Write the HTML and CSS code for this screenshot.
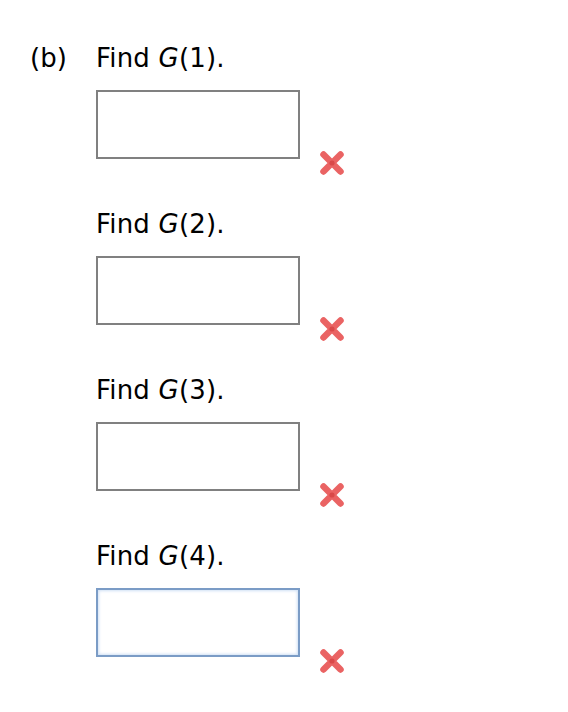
FILE: index.html
```html
<!DOCTYPE html>
<html>
<head>
<meta charset="utf-8">
<link rel="stylesheet" href="styles.css">
</head>
<body>
<svg width="0" height="0" class="defs"><defs><filter id="soft" x="-20%" y="-20%" width="140%" height="140%"><feGaussianBlur stdDeviation="0.6"/></filter></defs></svg>
<div class="part">
  <div class="part-label">(b)</div>
  <div class="questions">
    <div class="q">
      <div class="q-text">Find <i>G</i>(1).</div>
      <div class="answer-row">
        <div class="answer-box"></div>
        <svg class="x-icon" viewBox="0 0 28 28" width="28" height="28"><g filter="url(#soft)"><path d="M5.5 5.5 L22.5 22.5 M22.5 5.5 L5.5 22.5" stroke="#ea6464" stroke-width="6.5" stroke-linecap="round"/><circle cx="14" cy="14" r="2.6" fill="#d94848"/></g></svg>
      </div>
    </div>
    <div class="q">
      <div class="q-text">Find <i>G</i>(2).</div>
      <div class="answer-row">
        <div class="answer-box"></div>
        <svg class="x-icon" viewBox="0 0 28 28" width="28" height="28"><g filter="url(#soft)"><path d="M5.5 5.5 L22.5 22.5 M22.5 5.5 L5.5 22.5" stroke="#ea6464" stroke-width="6.5" stroke-linecap="round"/><circle cx="14" cy="14" r="2.6" fill="#d94848"/></g></svg>
      </div>
    </div>
    <div class="q">
      <div class="q-text">Find <i>G</i>(3).</div>
      <div class="answer-row">
        <div class="answer-box"></div>
        <svg class="x-icon" viewBox="0 0 28 28" width="28" height="28"><g filter="url(#soft)"><path d="M5.5 5.5 L22.5 22.5 M22.5 5.5 L5.5 22.5" stroke="#ea6464" stroke-width="6.5" stroke-linecap="round"/><circle cx="14" cy="14" r="2.6" fill="#d94848"/></g></svg>
      </div>
    </div>
    <div class="q">
      <div class="q-text">Find <i>G</i>(4).</div>
      <div class="answer-row">
        <div class="answer-box focused"></div>
        <svg class="x-icon" viewBox="0 0 28 28" width="28" height="28"><g filter="url(#soft)"><path d="M5.5 5.5 L22.5 22.5 M22.5 5.5 L5.5 22.5" stroke="#ea6464" stroke-width="6.5" stroke-linecap="round"/><circle cx="14" cy="14" r="2.6" fill="#d94848"/></g></svg>
      </div>
    </div>
  </div>
</div>
</body>
</html>
```
FILE: styles.css
```css
html, body {
  margin: 0;
  padding: 0;
  background: #ffffff;
}
body {
  font-family: "DejaVu Sans", Verdana, sans-serif;
  font-size: 26px;
  color: #000;
}
.defs {
  position: absolute;
}
.part {
  display: flex;
  padding: 44px 0 0 30px;
}
.part-label {
  width: 66px;
  line-height: 28px;
}
.questions {
  display: flex;
  flex-direction: column;
}
.q {
  margin-bottom: 33px;
}
.q-text {
  line-height: 28px;
  margin-bottom: 18px;
  letter-spacing: 0.2px;
}
.answer-row {
  display: flex;
  align-items: flex-start;
}
.answer-box {
  box-sizing: border-box;
  width: 204px;
  height: 69px;
  border: 2px solid #808080;
  background: #fff;
}
.answer-box.focused {
  border-color: #7b9cc6;
  box-shadow: inset 0 0 3px 1px #cfe0f5;
}
.x-icon {
  display: block;
  margin-left: 18px;
  margin-top: 59px;
}
```
